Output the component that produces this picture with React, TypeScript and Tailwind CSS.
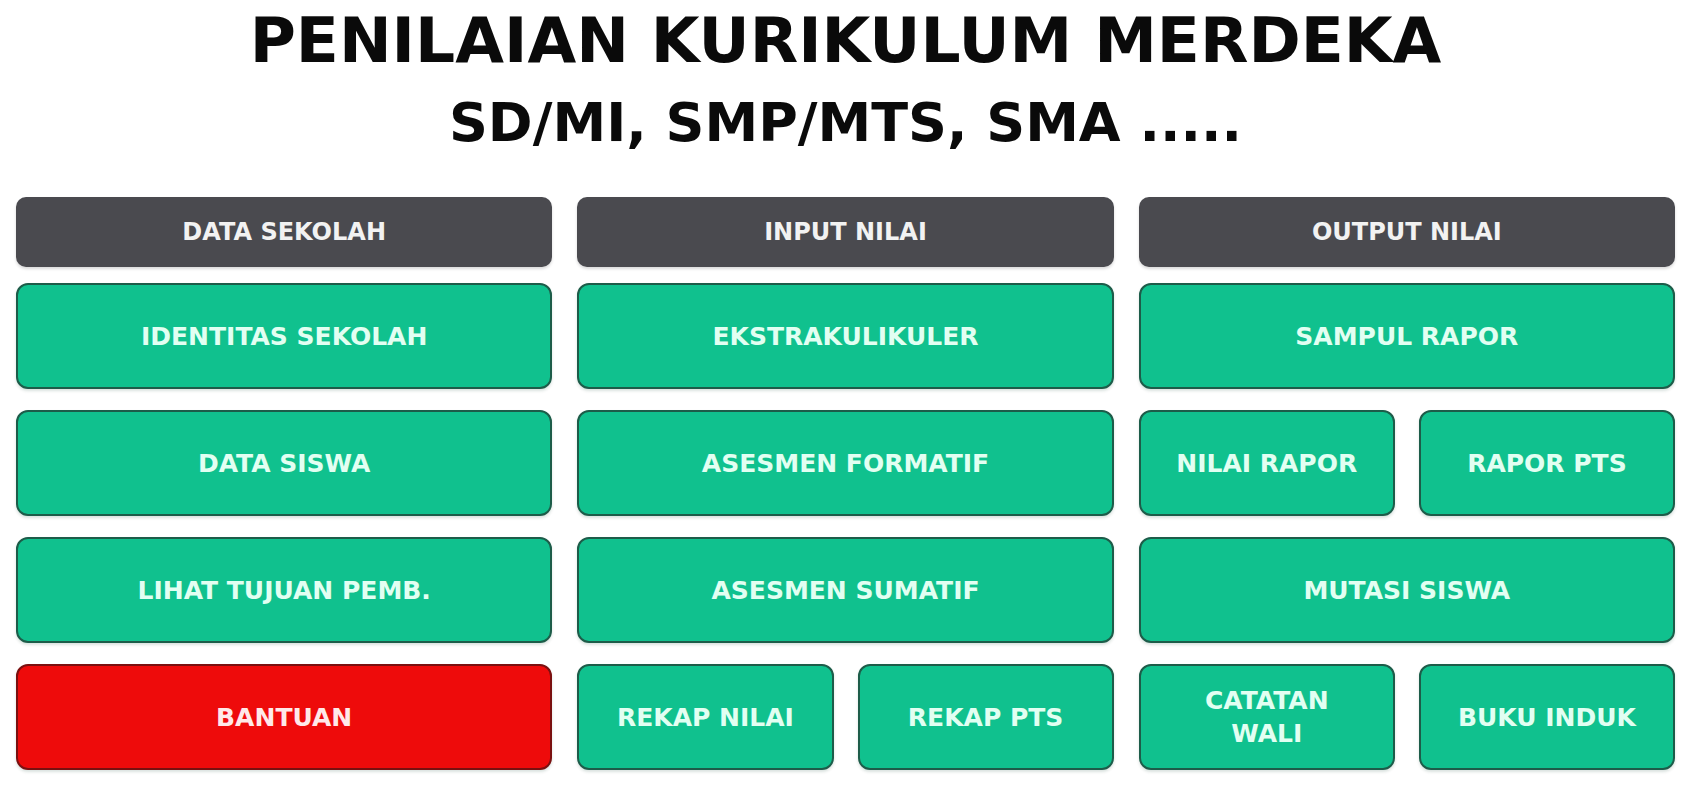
import React from 'react';

type Tile = { label: string[]; tone?: 'green' | 'red' };
type Row = Tile[];

const columns: { title: string; rows: Row[] }[] = [
  {
    title: 'DATA SEKOLAH',
    rows: [
      [{ label: ['IDENTITAS SEKOLAH'] }],
      [{ label: ['DATA SISWA'] }],
      [{ label: ['LIHAT TUJUAN PEMB.'] }],
      [{ label: ['BANTUAN'], tone: 'red' }],
    ],
  },
  {
    title: 'INPUT NILAI',
    rows: [
      [{ label: ['EKSTRAKULIKULER'] }],
      [{ label: ['ASESMEN FORMATIF'] }],
      [{ label: ['ASESMEN SUMATIF'] }],
      [{ label: ['REKAP NILAI'] }, { label: ['REKAP PTS'] }],
    ],
  },
  {
    title: 'OUTPUT NILAI',
    rows: [
      [{ label: ['SAMPUL RAPOR'] }],
      [{ label: ['NILAI RAPOR'] }, { label: ['RAPOR PTS'] }],
      [{ label: ['MUTASI SISWA'] }],
      [{ label: ['CATATAN', 'WALI'] }, { label: ['BUKU INDUK'] }],
    ],
  },
];

const MenuTile: React.FC<{ tile: Tile }> = ({ tile }) => {
  const red = tile.tone === 'red';
  return (
    <button
      className={
        'flex-1 h-full flex flex-col items-center justify-center rounded-[12px] border-2 text-[25px] font-bold leading-[33px] shadow-[0_2px_3px_rgba(0,60,40,0.15)] ' +
        (red
          ? 'bg-[#ee0b0b] border-[#7a1010] text-[#ffe9e9]'
          : 'bg-[#10c18e] border-[#1d5c49] text-[#e2fff2]')
      }
    >
      {tile.label.map((line, i) => (
        <span key={i}>{line}</span>
      ))}
    </button>
  );
};

const App: React.FC = () => {
  return (
    <div
      className="w-[1691px] h-[800px] bg-white overflow-hidden"
      style={{ fontFamily: '"DejaVu Sans", Verdana, sans-serif' }}
    >
      <header className="pt-[9px] text-center text-[#0a0a0a] font-bold">
        <h1 className="text-[63px] leading-none">PENILAIAN KURIKULUM MERDEKA</h1>
        <h2 className="mt-[24px] text-[54px] leading-none">SD/MI, SMP/MTS, SMA .....</h2>
      </header>

      <main className="mt-[47px] px-[16px] grid grid-cols-3 gap-x-[25px]">
        {columns.map((col) => (
          <div key={col.title} className="flex flex-col">
            <div className="h-[70px] flex items-center justify-center rounded-[10px] bg-[#4a4a4f] text-[#f2f2f2] text-[24px] font-bold shadow-[0_2px_3px_rgba(0,0,0,0.15)]">
              {col.title}
            </div>
            <div className="mt-[16px] flex flex-col gap-[21px]">
              {col.rows.map((row, i) => (
                <div key={i} className="h-[106px] flex gap-[24px]">
                  {row.map((tile) => (
                    <MenuTile key={tile.label.join(' ')} tile={tile} />
                  ))}
                </div>
              ))}
            </div>
          </div>
        ))}
      </main>
    </div>
  );
};

export default App;
